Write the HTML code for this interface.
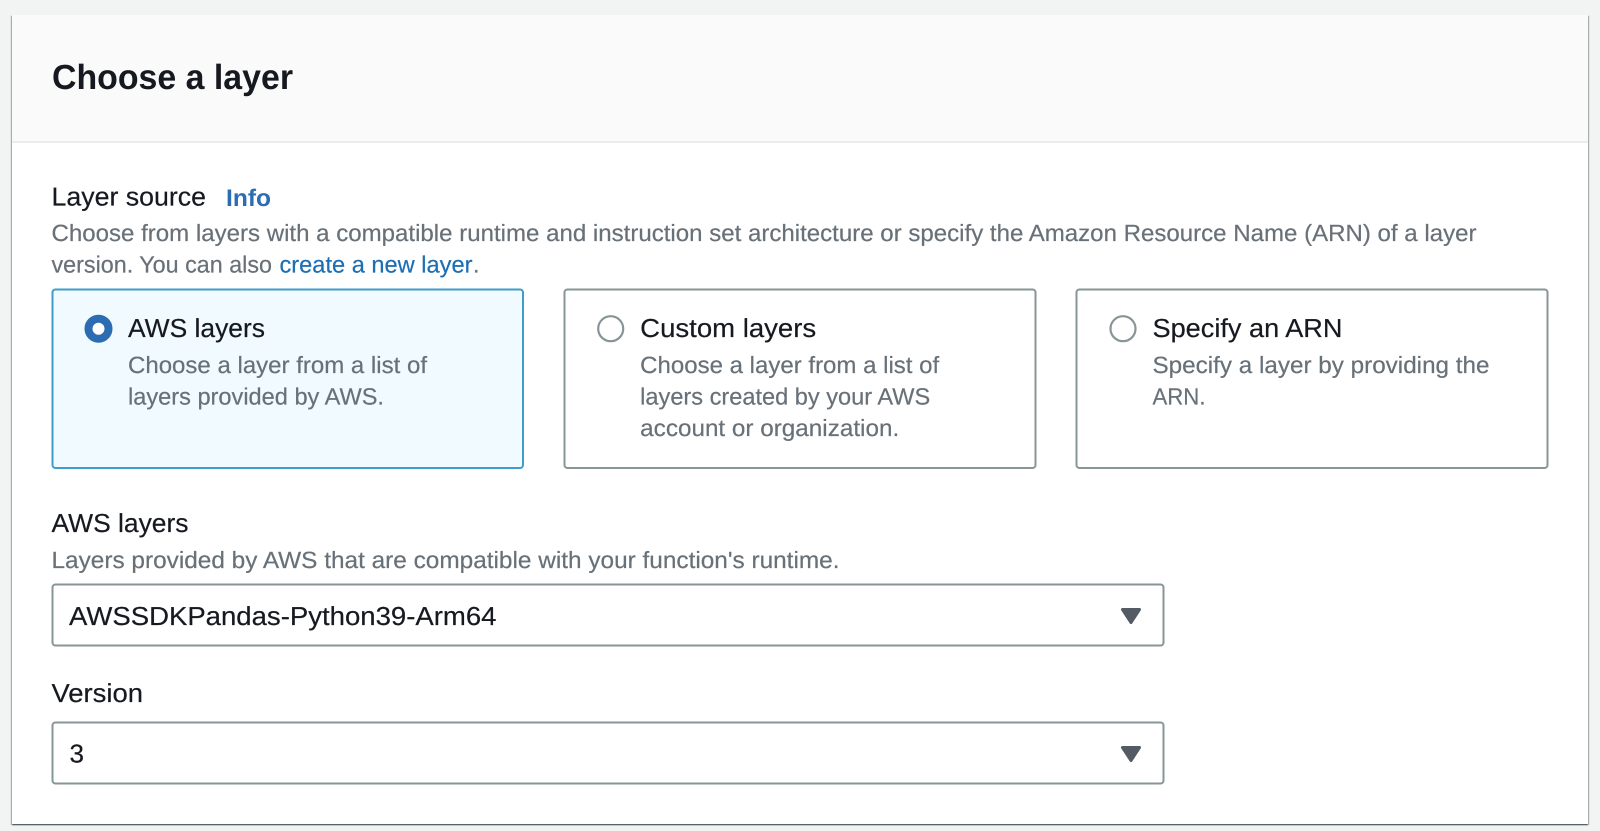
<!DOCTYPE html>
<html><head><meta charset="utf-8"><title>Choose a layer</title>
<style>
html,body{margin:0;padding:0;width:1600px;height:831px;overflow:hidden;background:#f2f3f3}
#card{position:absolute;left:12px;top:15px;width:1576px;height:809px;background:#fff;box-shadow:0 1px 1px 0 rgba(0,28,36,.5),1px 1px 1px 0 rgba(0,28,36,.3),-1px 1px 1px 0 rgba(0,28,36,.3)}
#head{position:absolute;left:0;top:0;width:1576px;height:126px;background:#fafafa;border-bottom:2px solid #eaeded}
svg{position:absolute;left:0;top:0}
text{font-family:"Liberation Sans",sans-serif;text-rendering:geometricPrecision}
.h{font-size:35px;font-weight:700;fill:#16191f}
.l{font-size:26px;fill:#16191f;stroke:#16191f;stroke-width:.2px}
.d{font-size:23.5px;fill:#687078;stroke:#687078;stroke-width:.2px}
.a{font-size:23.5px;fill:#1b6fb5;stroke:#1b6fb5;stroke-width:.2px}
.i{font-size:24px;font-weight:700;fill:#2b6cb3}
.s{font-size:26px;fill:#16191f;stroke:#16191f;stroke-width:.2px}
</style></head><body>
<div id="card"><div id="head"></div></div>
<svg width="1600" height="831" viewBox="0 0 1600 831" xmlns="http://www.w3.org/2000/svg">
<text class="h" x="52" y="89" textLength="241" lengthAdjust="spacingAndGlyphs">Choose a layer</text>
<text class="l" x="51.5" y="205.5" textLength="154.5" lengthAdjust="spacingAndGlyphs">Layer source</text>
<text class="i" x="226" y="206" textLength="45" lengthAdjust="spacingAndGlyphs">Info</text>
<text class="d" x="51.5" y="241" textLength="1425" lengthAdjust="spacingAndGlyphs">Choose from layers with a compatible runtime and instruction set architecture or specify the Amazon Resource Name (ARN) of a layer</text>
<text class="d" x="51.5" y="272.5" textLength="220.5" lengthAdjust="spacingAndGlyphs">version. You can also</text>
<text class="a" x="279.5" y="272.5" textLength="193" lengthAdjust="spacingAndGlyphs">create a new layer</text>
<text class="d" x="473" y="272.5">.</text>

<rect x="52.5" y="289.5" width="470.5" height="178.5" rx="3" fill="#f1faff" stroke="#3d9dcb" stroke-width="2"/>
<circle cx="98.5" cy="328.7" r="10" fill="#fff" stroke="#2b6cb3" stroke-width="8"/>
<text class="l" x="128" y="337" textLength="137" lengthAdjust="spacingAndGlyphs">AWS layers</text>
<text class="d" x="128" y="373" textLength="299" lengthAdjust="spacingAndGlyphs">Choose a layer from a list of</text>
<text class="d" x="128" y="404.5" textLength="256" lengthAdjust="spacingAndGlyphs">layers provided by AWS.</text>

<rect x="564.5" y="289.5" width="471" height="178.5" rx="3" fill="#fff" stroke="#879596" stroke-width="2"/>
<circle cx="610.7" cy="328.7" r="12.5" fill="#fff" stroke="#879596" stroke-width="2.2"/>
<text class="l" x="640.2" y="337" textLength="176" lengthAdjust="spacingAndGlyphs">Custom layers</text>
<text class="d" x="640.2" y="373" textLength="299" lengthAdjust="spacingAndGlyphs">Choose a layer from a list of</text>
<text class="d" x="640.2" y="404.5" textLength="290" lengthAdjust="spacingAndGlyphs">layers created by your AWS</text>
<text class="d" x="640.2" y="436" textLength="259" lengthAdjust="spacingAndGlyphs">account or organization.</text>

<rect x="1076.5" y="289.5" width="471" height="178.5" rx="3" fill="#fff" stroke="#879596" stroke-width="2"/>
<circle cx="1123" cy="328.7" r="12.5" fill="#fff" stroke="#879596" stroke-width="2.2"/>
<text class="l" x="1152.5" y="337" textLength="190" lengthAdjust="spacingAndGlyphs">Specify an ARN</text>
<text class="d" x="1152.5" y="373" textLength="337" lengthAdjust="spacingAndGlyphs">Specify a layer by providing the</text>
<text class="d" x="1152.5" y="404.5" textLength="53" lengthAdjust="spacingAndGlyphs">ARN.</text>

<text class="l" x="51.5" y="532" textLength="137" lengthAdjust="spacingAndGlyphs">AWS layers</text>
<text class="d" x="51.5" y="568" textLength="788" lengthAdjust="spacingAndGlyphs">Layers provided by AWS that are compatible with your function's runtime.</text>
<rect x="52.5" y="584.5" width="1111" height="61" rx="3" fill="#fff" stroke="#879596" stroke-width="2"/>
<text class="s" x="69" y="625" textLength="427.5" lengthAdjust="spacingAndGlyphs">AWSSDKPandas-Python39-Arm64</text>
<path d="M1122.5 609.5H1139.5L1131 622.5Z" fill="#545b64" stroke="#545b64" stroke-width="3" stroke-linejoin="round"/>

<text class="l" x="51.5" y="702" textLength="91.5" lengthAdjust="spacingAndGlyphs">Version</text>
<rect x="52.5" y="722.5" width="1111" height="61" rx="3" fill="#fff" stroke="#879596" stroke-width="2"/>
<text class="s" x="69.5" y="762.5" textLength="14.5" lengthAdjust="spacingAndGlyphs">3</text>
<path d="M1122.5 747.5H1139.5L1131 760.5Z" fill="#545b64" stroke="#545b64" stroke-width="3" stroke-linejoin="round"/>
</svg>
</body></html>
